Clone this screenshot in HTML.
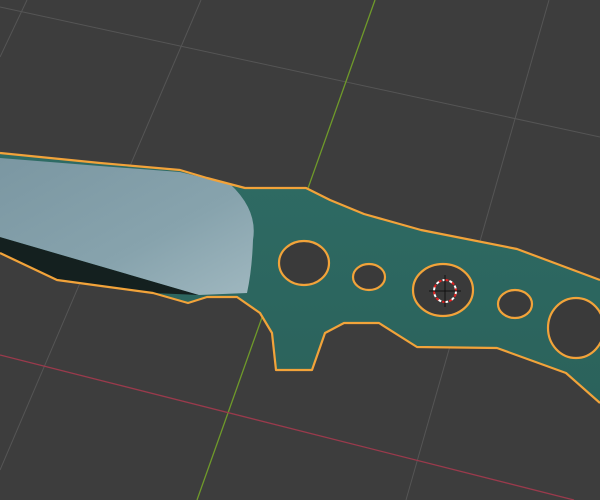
<!DOCTYPE html>
<html><head><style>html,body{margin:0;padding:0;background:#3d3d3d;width:600px;height:500px;overflow:hidden}</style></head>
<body>
<svg width="600" height="500" viewBox="0 0 600 500" xmlns="http://www.w3.org/2000/svg">
<defs>
<linearGradient id="bl" x1="0" y1="0" x2="1" y2="1">
<stop offset="0" stop-color="#7b97a2"/><stop offset="0.6" stop-color="#87a3ad"/><stop offset="1" stop-color="#9fb7bf"/>
</linearGradient>
<linearGradient id="tl" x1="0" y1="0" x2="0" y2="1">
<stop offset="0" stop-color="#2e6b64"/><stop offset="1" stop-color="#2b625b"/>
</linearGradient>
</defs>
<rect width="600" height="500" fill="#3d3d3d"/>
<g stroke="#555" stroke-width="1" fill="none">
<line x1="0" y1="7" x2="600" y2="137"/>
<line x1="27" y1="0" x2="0" y2="57"/>
<line x1="201" y1="0" x2="0" y2="470"/>
<line x1="549" y1="0" x2="406" y2="500"/>
</g>
<line x1="375" y1="0" x2="197" y2="500" stroke="#6f9a2a" stroke-width="1.3"/>
<line x1="0" y1="355" x2="574" y2="500" stroke="#9a3a4c" stroke-width="1.3"/>
<path d="M0,153 L100,163 L180,170 L207,178 L245,188 L306,188 L330,200 L364,214 L421,230 L517,249 L600,280 L600,403 L566,373 L497,348 L417,347 L379,323 L344,323 L325,333 L312,370 L276,370 L272,333 L260,313 L237,297 L207,297 L188,303 L153,293 L57,280 L0,253 Z" fill="url(#tl)"/>
<path d="M0,237 L199,295 L153,293 L57,280 L0,253 Z" fill="#14201f"/>
<path d="M0,158 L100,166 L180,172 L230,184 Q258,210 253,240 Q252,270 247,293 L199,295 L0,237 Z" fill="url(#bl)"/>
<path d="M0,153 L100,163 L180,170 L207,178 L245,188 L306,188 L330,200 L364,214 L421,230 L517,249 L600,280 M600,403 L566,373 L497,348 L417,347 L379,323 L344,323 L325,333 L312,370 L276,370 L272,333 L260,313 L237,297 L207,297 L188,303 L153,293 L57,280 L0,253" fill="none" stroke="#f2a33a" stroke-width="2.2" stroke-linejoin="round"/>
<g fill="#3a3a3a" stroke="#f2a33a" stroke-width="2.2">
<ellipse cx="304" cy="263" rx="25" ry="22"/>
<ellipse cx="369" cy="277" rx="16" ry="13"/>
<ellipse cx="443" cy="290" rx="30" ry="26"/>
<ellipse cx="515" cy="304" rx="17" ry="14"/>
<ellipse cx="576" cy="328" rx="28" ry="30"/>
</g>
<circle cx="445" cy="291" r="11" fill="none" stroke="#fff" stroke-width="2" stroke-dasharray="4 3"/>
<circle cx="445" cy="291" r="11" fill="none" stroke="#e02020" stroke-width="2" stroke-dasharray="3 4" stroke-dashoffset="4"/>
<g stroke="#111" stroke-width="1"><line x1="445" y1="275" x2="445" y2="307"/><line x1="429" y1="291" x2="461" y2="291"/></g>
</svg>
</body></html>
